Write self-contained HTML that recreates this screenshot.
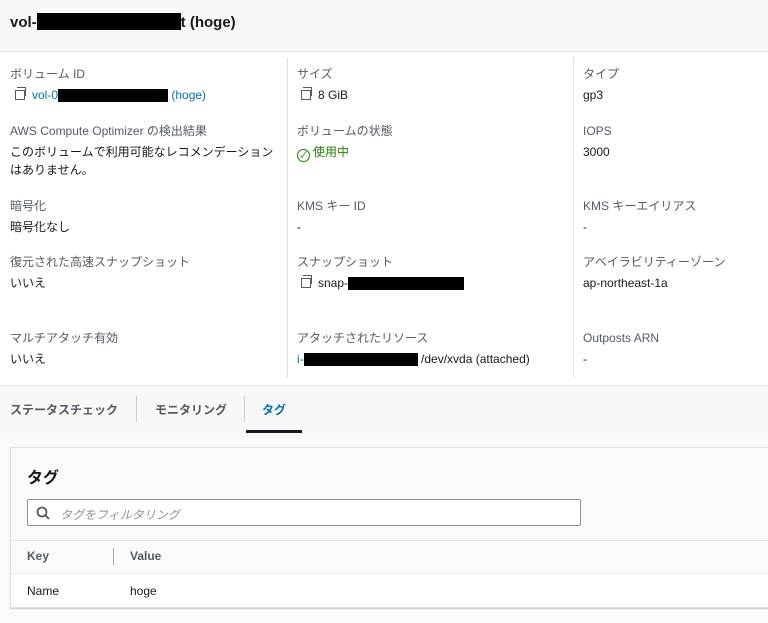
<!DOCTYPE html>
<html><head><meta charset="utf-8"><style>
*{margin:0;padding:0;box-sizing:border-box}
body{width:768px;height:623px;overflow:hidden;background:#fafafa;font-family:"Liberation Sans","Noto Sans CJK JP",sans-serif;font-size:12px;color:#16191f}
.hdr{height:52px;background:#f8f8f8;border-bottom:1px solid #e5e5e5;padding:14px 10px;font-weight:bold;font-size:15px}
.blk{display:inline-block;background:#000;vertical-align:middle}
.det{position:relative;height:333px;background:#fff}
.col{position:absolute;top:0;height:325px}
.vl{position:absolute;top:6px;width:1px;height:320px;background:#e0e0e0}
.f{position:absolute;left:10px}
.lb{color:#545b64;line-height:18px}
.vv{line-height:18px}
.lnk{color:#0073bb}
.cp{display:inline-block;width:10px;height:10px;border:1.5px solid #545b64;position:relative;margin-right:7px;vertical-align:-1px}
.cp:before{content:"";position:absolute;left:1px;top:-4px;width:8px;height:8px;border-top:1.5px solid #545b64;border-right:1.5px solid #545b64}
.tabs{position:absolute;top:385px;left:0;width:768px;height:48px;background:#f8f8f8;border-top:1px solid #eaeaea;font-weight:bold;color:#545b64}
.tab{position:absolute;top:15px}
.panel{position:absolute;top:447px;left:10px;width:770px;height:161px;background:#fff;border:1px solid #e3e3e3;box-shadow:0 1px 1px rgba(0,0,0,.2)}
</style></head><body>
<div class="hdr">vol-<span class="blk" style="width:144px;height:17px;margin-top:-3px"></span>t (hoge)</div>
<div class="det">
<div class="vl" style="left:287px"></div><div class="vl" style="left:573px"></div>
<div class="col" style="left:0;width:287px">
<div class="f" style="top:13px"><div class="lb">ボリューム ID</div><div class="vv lnk" style="margin-top:3px;margin-left:5px"><span class="cp"></span>vol-0<span class="blk" style="width:110px;height:13px"></span> (hoge)</div></div>
<div class="f" style="top:70px"><div class="lb">AWS Compute Optimizer の検出結果</div><div class="vv" style="margin-top:3px">このボリュームで利用可能なレコメンデーション<br>はありません。</div></div>
<div class="f" style="top:145px"><div class="lb">暗号化</div><div class="vv" style="margin-top:3px">暗号化なし</div></div>
<div class="f" style="top:201px"><div class="lb">復元された高速スナップショット</div><div class="vv" style="margin-top:3px">いいえ</div></div>
<div class="f" style="top:277px"><div class="lb">マルチアタッチ有効</div><div class="vv" style="margin-top:3px">いいえ</div></div>
</div>
<div class="col" style="left:287px;width:286px">
<div class="f" style="top:13px"><div class="lb">サイズ</div><div class="vv" style="margin-top:3px;margin-left:4px"><span class="cp"></span>8 GiB</div></div>
<div class="f" style="top:70px"><div class="lb">ボリュームの状態</div><div class="vv" style="margin-top:3px;color:#1d8102"><span style="display:inline-block;width:13px;height:13px;border:1.5px solid #1d8102;border-radius:50%;vertical-align:-2px;margin-right:3px;text-align:center;font-size:9px;line-height:10px">✓</span>使用中</div></div>
<div class="f" style="top:145px"><div class="lb">KMS キー ID</div><div class="vv" style="margin-top:3px">-</div></div>
<div class="f" style="top:201px"><div class="lb">スナップショット</div><div class="vv" style="margin-top:3px;margin-left:4px"><span class="cp"></span>snap-<span class="blk" style="width:116px;height:13px"></span></div></div>
<div class="f" style="top:277px"><div class="lb">アタッチされたリソース</div><div class="vv" style="margin-top:3px"><span class="lnk">i-</span><span class="blk" style="width:114px;height:13px"></span> /dev/xvda (attached)</div></div>
</div>
<div class="col" style="left:573px;width:195px">
<div class="f" style="top:13px"><div class="lb">タイプ</div><div class="vv" style="margin-top:3px">gp3</div></div>
<div class="f" style="top:70px"><div class="lb">IOPS</div><div class="vv" style="margin-top:3px">3000</div></div>
<div class="f" style="top:145px"><div class="lb">KMS キーエイリアス</div><div class="vv" style="margin-top:3px">-</div></div>
<div class="f" style="top:201px"><div class="lb">アベイラビリティーゾーン</div><div class="vv" style="margin-top:3px">ap-northeast-1a</div></div>
<div class="f" style="top:277px"><div class="lb">Outposts ARN</div><div class="vv" style="margin-top:3px">-</div></div>
</div>
</div>
<div class="tabs">
<div class="tab" style="left:10px">ステータスチェック</div>
<div style="position:absolute;left:136px;top:10px;width:1px;height:26px;background:#ccc"></div>
<div class="tab" style="left:155px">モニタリング</div>
<div style="position:absolute;left:244px;top:10px;width:1px;height:26px;background:#ccc"></div>
<div class="tab" style="left:262px;color:#0073bb">タグ</div>
<div style="position:absolute;left:246px;top:44px;width:56px;height:3px;background:#16191f"></div>
</div>
<div class="panel">
<div style="position:absolute;left:0;top:0;width:100%;height:93px;background:#fafafa;border-bottom:1px solid #eaeaea"></div>
<div style="position:absolute;left:16px;top:16px;font-size:16px;font-weight:bold">タグ</div>
<div style="position:absolute;left:16px;top:51px;width:554px;height:27px;background:#fff;border:1px solid #879596;border-radius:2px">
<svg style="position:absolute;left:8px;top:6px" width="14" height="14" viewBox="0 0 14 14"><circle cx="6" cy="6" r="4.5" fill="none" stroke="#545b64" stroke-width="1.8"/><path d="M9.3 9.3L13 13" stroke="#545b64" stroke-width="1.8"/></svg>
<span style="position:absolute;left:32px;top:6px;color:#879596;font-style:italic">タグをフィルタリング</span></div>
<div style="position:absolute;left:0;top:93px;width:100%;height:33px;background:#fafafa;border-bottom:1px solid #eaeaea"></div>
<div style="position:absolute;left:16px;top:101px;font-weight:bold;color:#545b64">Key</div>
<div style="position:absolute;left:102px;top:100px;width:1px;height:17px;background:#aaa"></div>
<div style="position:absolute;left:119px;top:101px;font-weight:bold;color:#545b64">Value</div>
<div style="position:absolute;left:16px;top:136px">Name</div>
<div style="position:absolute;left:119px;top:136px">hoge</div>
</div>
</body></html>
